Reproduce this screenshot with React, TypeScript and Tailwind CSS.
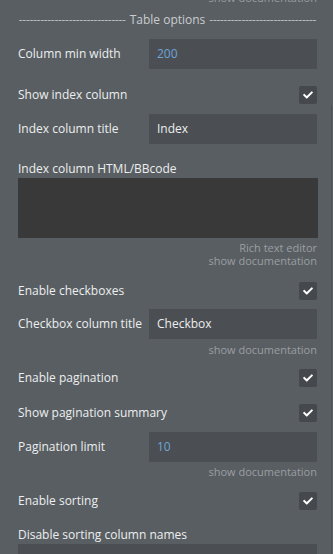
import { FaCheck } from 'react-icons/fa';

const font = { fontFamily: '"Open Sans", "Noto Sans", sans-serif' };

function DocLink({ lines, className = '' }: { lines: string[]; className?: string }) {
  return (
    <div className={`text-right text-[11px] leading-[13px] text-[#9a9fa3] ${className}`}>
      {lines.map((l) => (
        <div key={l}>{l}</div>
      ))}
    </div>
  );
}

function InputRow({ label, value, blue, className = '' }: { label: string; value: string; blue?: boolean; className?: string }) {
  return (
    <div className={`flex items-center h-[30px] ${className}`}>
      <div className="w-[131px] text-[12px] text-[#eceeef] whitespace-nowrap">{label}</div>
      <div
        className={`flex-1 h-full bg-[#4b4f53] flex items-center px-[8px] text-[12px] ${
          blue ? 'text-[#6da4d8]' : 'text-[#eceeef]'
        }`}
      >
        {value}
      </div>
    </div>
  );
}

function CheckRow({ label, className = '' }: { label: string; className?: string }) {
  return (
    <div className={`flex items-center justify-between h-[18px] ${className}`}>
      <div className="text-[12px] text-[#eceeef]">{label}</div>
      <div className="w-[18px] h-[18px] rounded-[2px] bg-[#45494d] flex items-center justify-center">
        <FaCheck className="text-white w-[10px] h-[10px]" />
      </div>
    </div>
  );
}

export default function App() {
  const dashes = '-'.repeat(30);
  return (
    <div style={font} className="w-[333px] h-[554px] overflow-hidden bg-[#595e62] relative">
      <div className="absolute right-[1px] top-[105px] bottom-0 w-px bg-[#4e5256]" />
      <div className="pl-[18px] pr-[16px] -mt-[9px]">
        <DocLink lines={['show documentation']} />

        <div className="mt-[7px] flex items-center justify-center h-[18px] text-[12px] text-[#c9cccf] whitespace-nowrap tracking-[-0.3px]">
          <span className="text-[#b9bdc0]">{dashes}</span>
          <span className="px-[4px] tracking-normal">Table options</span>
          <span className="text-[#b9bdc0]">{dashes}</span>
        </div>

        <InputRow label="Column min width" value="200" blue className="mt-[10px]" />
        <CheckRow label="Show index column" className="mt-[17px]" />
        <InputRow label="Index column title" value="Index" className="mt-[10px]" />

        <div className="mt-[16px] h-[18px] flex items-center text-[12px] text-[#eceeef]">
          Index column HTML/BBcode
        </div>
        <div className="h-[60px] bg-[#393939] mr-[-1px]" />
        <DocLink lines={['Rich text editor', 'show documentation']} className="mt-[3px]" />

        <CheckRow label="Enable checkboxes" className="mt-[15px]" />
        <InputRow label="Checkbox column title" value="Checkbox" className="mt-[9px]" />
        <DocLink lines={['show documentation']} className="mt-[4px]" />

        <CheckRow label="Enable pagination" className="mt-[13px]" />
        <CheckRow label="Show pagination summary" className="mt-[17px]" />
        <InputRow label="Pagination limit" value="10" blue className="mt-[10px]" />
        <DocLink lines={['show documentation']} className="mt-[3px]" />

        <CheckRow label="Enable sorting" className="mt-[14px]" />
        <div className="mt-[16px] h-[18px] flex items-center text-[12px] text-[#eceeef]">
          Disable sorting column names
        </div>
        <div className="h-[30px] bg-[#4b4f53]" />
      </div>
    </div>
  );
}
